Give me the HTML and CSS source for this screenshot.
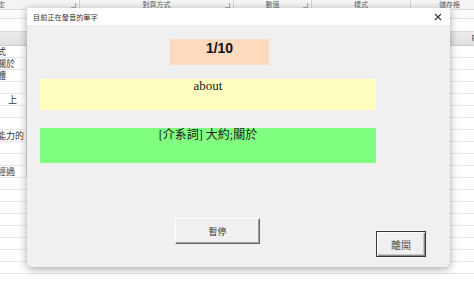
FILE: index.html
```html
<!DOCTYPE html>
<html lang="zh-Hant">
<head>
  <meta charset="utf-8">
  <title>目前正在發音的單字</title>
  <link rel="stylesheet" href="styles.css">
</head>
<body>
<div class="sheet">
  <div class="ribbon">
    <span class="group g-font">定<i class="launcher"></i></span>
    <span class="group g-align">對齊方式<i class="launcher"></i></span>
    <span class="group g-num">數值<i class="launcher"></i></span>
    <span class="group g-style">樣式</span>
    <span class="group g-cell">儲存格</span>
  </div>
  <div class="formula-row"></div>
  <div class="name-row"></div>
  <div class="col-header"><span class="col-f">F</span></div>
  <div class="grid">
    <div class="col-left">
      <div class="cell">式</div>
      <div class="cell">關於</div>
      <div class="cell">體</div>
      <div class="cell"></div>
      <div class="cell cell-in">上</div>
      <div class="cell"></div>
      <div class="cell"></div>
      <div class="cell">能力的</div>
      <div class="cell"></div>
      <div class="cell"></div>
      <div class="cell">經過</div>
    </div>
  </div>
</div>

<div class="dialog">
  <div class="titlebar">
    <span class="title">目前正在發音的單字</span>
    <svg class="close" width="8" height="8" viewBox="0 0 8 8">
      <path d="M1 1 L7 7 M7 1 L1 7" stroke="#333" stroke-width="1.1"/>
    </svg>
  </div>
  <div class="dialog-body">
    <div class="counter">1/10</div>
    <div class="word">about</div>
    <div class="meaning">[介系詞] 大約;關於</div>
    <div class="footer">
      <button class="btn btn-pause">暫停</button>
      <button class="btn btn-exit">離開</button>
    </div>
  </div>
</div>
</body>
</html>
```

FILE: styles.css
```css
body {
  margin: 0;
  width: 474px;
  height: 282px;
  overflow: hidden;
  font-family: "Noto Sans CJK TC", "Liberation Sans", sans-serif;
  background: #fff;
}

/* spreadsheet behind the dialog */
.sheet {
  width: 474px;
  height: 282px;
}

.ribbon {
  display: flex;
  height: 9px;
  background: #f4f4f4;
  border-bottom: 1px solid #dadada;
  font-size: 7px;
  line-height: 9px;
  color: #666;
}

.group {
  position: relative;
  box-sizing: border-box;
  text-align: center;
  border-right: 1px solid #d6d6d6;
}

.g-font { width: 80px; text-align: left; text-indent: -2px; }
.g-align { width: 154px; }
.g-num { width: 78px; }
.g-style { width: 99px; }
.g-cell { flex: 1; border-right: 0; text-indent: 14px; }

.launcher {
  position: absolute;
  right: 3px;
  top: 3px;
  width: 4px;
  height: 4px;
  border-right: 1px solid #aaa;
  border-bottom: 1px solid #aaa;
}

.formula-row {
  height: 8px;
  background: #fbfbfb;
  border-bottom: 1px solid #e2e2e2;
}

.name-row {
  height: 12px;
  background: #fff;
  border-bottom: 1px solid #d8d8d8;
}

.col-header {
  height: 13px;
  background: linear-gradient(#ececec, #e0e0e0);
  border-bottom: 1px solid #cdcdcd;
  display: flex;
  justify-content: flex-end;
}

.col-f {
  font-family: "Liberation Sans", sans-serif;
  font-size: 9px;
  line-height: 13px;
  color: #555;
  margin-right: -3px;
}

.grid {
  height: 236px;
  background:
    repeating-linear-gradient(#fff 0 11px, #e6e6e6 11px 12px);
}

.col-left {
  width: 26px;
  border-right: 1px solid #e0e0e0;
  overflow: hidden;
}

.cell {
  height: 12px;
  font-size: 9px;
  line-height: 12px;
  color: #333;
  white-space: nowrap;
  text-indent: -3px;
}

.cell-in { text-indent: 8px; }

/* dialog window */
.dialog {
  position: absolute;
  left: 27px;
  top: 8px;
  width: 423px;
  height: 259px;
  background: #f0f0f0;
  border-radius: 2px 2px 5px 5px;
  box-shadow: 0 2px 9px rgba(0, 0, 0, 0.35);
  display: flex;
  flex-direction: column;
}

.titlebar {
  height: 17px;
  flex: none;
  background: #fff;
  display: flex;
  align-items: center;
  justify-content: space-between;
  padding: 0 6px 0 6px;
  border-radius: 2px 2px 0 0;
}

.title {
  font-size: 7.2px;
  color: #333;
}

.close {
  margin-right: 2px;
}

.dialog-body {
  flex: 1;
  padding: 14px 0 0 13px;
  display: flex;
  flex-direction: column;
  align-items: flex-start;
}

.counter {
  margin-left: 130px;
  width: 99px;
  height: 26px;
  background: #fddabd;
  text-align: center;
  font-family: "Liberation Sans", Arial, sans-serif;
  font-weight: bold;
  font-size: 14px;
  line-height: 16px;
  padding-top: 1px;
  box-sizing: border-box;
  color: #111;
}

.word,
.meaning {
  width: 336px;
  text-align: center;
  font-family: "Liberation Serif", "Noto Sans CJK TC", serif;
  color: #222;
}

.word {
  margin-top: 14px;
  height: 31px;
  background: #ffffc0;
  font-size: 13px;
  line-height: 14px;
}

.meaning {
  margin-top: 18px;
  height: 35px;
  background: #80ff80;
  font-size: 12px;
  line-height: 14px;
}

.footer {
  margin-top: 55px;
  height: 39px;
  display: flex;
  align-items: flex-start;
}

.btn {
  font-family: "Noto Sans CJK TC", sans-serif;
  font-size: 9px;
  color: #333;
  background: #f0f0f0;
  padding: 0;
  height: 26px;
  box-sizing: border-box;
  border: 1px solid;
  border-color: #fff #696969 #696969 #fff;
  box-shadow: inset -1px -1px 0 #a0a0a0;
}

.btn-pause {
  margin-left: 135px;
  width: 85px;
}

.btn-exit {
  margin-left: 116px;
  margin-top: 13px;
  width: 50px;
  font-size: 10px;
  color: #555;
  border: 1px solid #3a3a3a;
  box-shadow: inset 1px 1px 0 #fff, inset -1px -1px 0 #8a8a8a, inset -2px -2px 0 #c8c8c8;
}
```
